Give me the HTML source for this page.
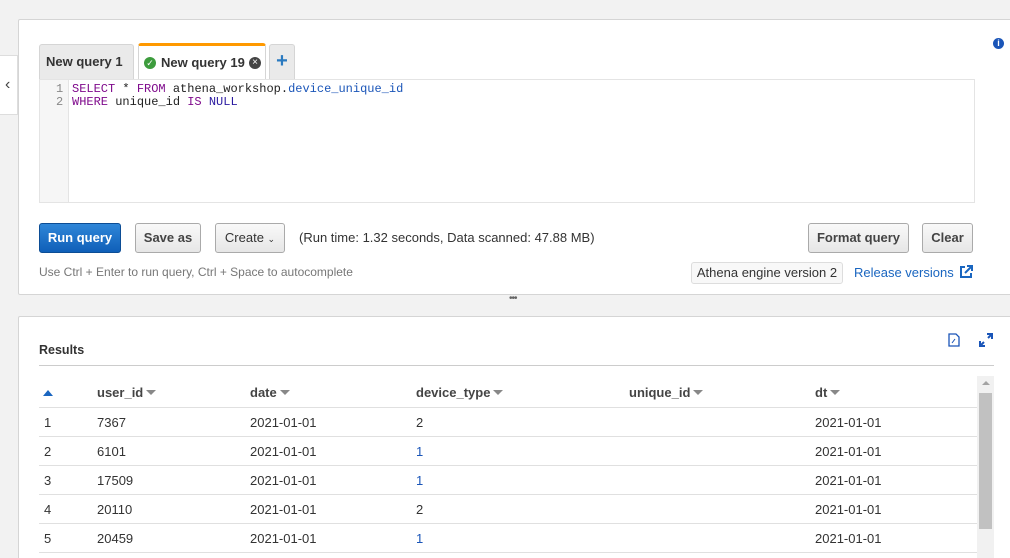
<!DOCTYPE html>
<html style="width:1010px;height:558px;overflow:hidden"><head><style>
*{box-sizing:border-box;margin:0;padding:0}
body{width:1010px;height:558px;background:#f2f2f2;font-family:"Liberation Sans",Arial,sans-serif;font-size:13px;color:#333;position:relative;overflow:hidden}
.abs{position:absolute}
.panel{position:absolute;background:#fff;border:1px solid #d5d5d5;border-radius:2px}
.btn{position:absolute;height:30px;border:1px solid #aaa;border-radius:3px;background:linear-gradient(#f9f9f9,#e6e6e6);font-size:13px;font-weight:bold;color:#444;line-height:28px;text-align:center}
.mono{font-family:"Liberation Mono",monospace;font-size:12px}
.kw{color:#7f0a8c}.bl{color:#1a55b8}
.th{position:absolute;top:385px;font-weight:bold;font-size:13px;color:#444}
.car{display:inline-block;width:0;height:0;border-left:5px solid transparent;border-right:5px solid transparent;border-top:5px solid #888;margin-left:3px;vertical-align:2px}
.row{position:absolute;left:39px;width:938px;height:29px;border-top:1px solid #e0e0e0;font-size:13px}
.row span{position:absolute;top:7px}
</style></head><body>
<div class="abs" style="left:0;top:55px;width:18px;height:60px;background:#fff;border:1px solid #ddd;border-left:none"></div>
<div class="abs" style="left:5px;top:76px;font-size:16px;color:#444">&#8249;</div>
<div class="panel" style="left:18px;top:19px;width:1000px;height:276px"></div>
<div class="abs" style="left:993px;top:38px;width:11px;height:11px;border-radius:50%;background:#1a55b8;color:#fff;font-size:9px;font-weight:bold;text-align:center;line-height:11px">i</div>
<div class="abs" style="left:39px;top:44px;width:95px;height:35px;background:#eaeaea;border:1px solid #d5d5d5;border-bottom:none;border-radius:3px 3px 0 0;font-weight:bold;font-size:13px;padding:9px 0 0 6px;color:#333">New query 1</div>
<div class="abs" style="left:138px;top:43px;width:128px;height:36px;background:#fff;border:1px solid #d5d5d5;border-top:3px solid #ff9900;border-bottom:none;border-radius:3px 3px 0 0;font-weight:bold;font-size:13px;padding:9px 0 0 22px;color:#333">New query 19</div>
<div class="abs" style="left:144px;top:57px;width:12px;height:12px;border-radius:50%;background:#3d9c3d;color:#fff;font-size:9px;text-align:center;line-height:12px">&#10003;</div>
<div class="abs" style="left:249px;top:57px;width:12px;height:12px;border-radius:50%;background:#444;color:#fff;font-size:10px;text-align:center;line-height:11px">&#215;</div>
<div class="abs" style="left:269px;top:44px;width:26px;height:35px;background:#eaeaea;border:1px solid #d5d5d5;border-bottom:none;border-radius:3px 3px 0 0;color:#2a7ac0;font-size:20px;font-weight:bold;text-align:center;line-height:32px">+</div>
<div class="abs" style="left:39px;top:79px;width:936px;height:124px;border:1px solid #e4e4e4;background:#fff"></div>
<div class="abs" style="left:40px;top:80px;width:29px;height:122px;background:#f6f6f6;border-right:1px solid #e4e4e4"></div>
<div class="abs mono" style="left:56px;top:83px;color:#888;line-height:13px">1<br>2</div>
<div class="abs mono" style="left:72px;top:83px;line-height:13px;color:#222"><span class="kw">SELECT</span> * <span class="kw">FROM</span> athena_workshop.<span class="bl">device_unique_id</span><br><span class="kw">WHERE</span> unique_id <span class="kw">IS</span> <span class="kw" style="color:#2a1aa0">NULL</span></div>
<div class="btn" style="left:39px;top:223px;width:82px;background:linear-gradient(#2f86d8,#0f5fb8);border-color:#0c4d95;color:#fff">Run query</div>
<div class="btn" style="left:135px;top:223px;width:66px">Save as</div>
<div class="btn" style="left:215px;top:223px;width:70px;font-weight:normal;color:#333">Create <span style="font-size:9px">&#8964;</span></div>
<div class="abs" style="left:299px;top:230px;font-size:13px;color:#333">(Run time: 1.32 seconds, Data scanned: 47.88 MB)</div>
<div class="btn" style="left:808px;top:223px;width:101px">Format query</div>
<div class="btn" style="left:922px;top:223px;width:51px">Clear</div>
<div class="abs" style="left:39px;top:265px;font-size:12px;color:#777">Use Ctrl + Enter to run query, Ctrl + Space to autocomplete</div>
<div class="abs" style="left:691px;top:262px;width:152px;height:22px;border:1px solid #ddd;border-radius:3px;background:#f8f8f8;font-size:13px;line-height:20px;text-align:center;color:#333">Athena engine version 2</div>
<div class="abs" style="left:854px;top:265px;font-size:13px;color:#1a66c0">Release versions</div>
<svg class="abs" style="left:959px;top:265px" width="14" height="14" viewBox="0 0 14 14"><path d="M6 2H2v10h10V8" fill="none" stroke="#1a66c0" stroke-width="2"/><path d="M8 1h5v5M13 1L6 8" fill="none" stroke="#1a66c0" stroke-width="2"/></svg>
<div class="abs" style="left:509px;top:293px;font-size:10px;color:#666;letter-spacing:-1px">&#8226;&#8226;&#8226;</div>
<div class="panel" style="left:18px;top:316px;width:1000px;height:260px"></div>
<div class="abs" style="left:39px;top:343px;font-weight:bold;font-size:12.5px;color:#333">Results</div>
<svg class="abs" style="left:948px;top:333px" width="12" height="14" viewBox="0 0 12 14"><path d="M1 1h7l3 3v9H1z" fill="none" stroke="#1a55b8" stroke-width="1.3"/><path d="M4 10l3-4" stroke="#1a55b8"/></svg>
<svg class="abs" style="left:979px;top:333px" width="14" height="14" viewBox="0 0 14 14"><path d="M8 1h5v5M13 1L9 5M6 13H1V8M1 13l4-4" fill="none" stroke="#1a55b8" stroke-width="2"/></svg>
<div class="abs" style="left:39px;top:365px;width:955px;height:1px;background:#ccc"></div>
<div class="abs" style="left:43px;top:390px;width:0;height:0;border-left:5px solid transparent;border-right:5px solid transparent;border-bottom:6px solid #1a66c0"></div>
<div class="th" style="left:97px">user_id<span class="car"></span></div>
<div class="th" style="left:250px">date<span class="car"></span></div>
<div class="th" style="left:416px">device_type<span class="car"></span></div>
<div class="th" style="left:629px">unique_id<span class="car"></span></div>
<div class="th" style="left:815px">dt<span class="car"></span></div>
<div class="row" style="top:407px"><span style="left:5px">1</span><span style="left:58px">7367</span><span style="left:211px">2021-01-01</span><span style="left:377px">2</span><span style="left:776px">2021-01-01</span></div>
<div class="row" style="top:436px"><span style="left:5px">2</span><span style="left:58px">6101</span><span style="left:211px">2021-01-01</span><span style="left:377px;color:#1a55b8">1</span><span style="left:776px">2021-01-01</span></div>
<div class="row" style="top:465px"><span style="left:5px">3</span><span style="left:58px">17509</span><span style="left:211px">2021-01-01</span><span style="left:377px;color:#1a55b8">1</span><span style="left:776px">2021-01-01</span></div>
<div class="row" style="top:494px"><span style="left:5px">4</span><span style="left:58px">20110</span><span style="left:211px">2021-01-01</span><span style="left:377px">2</span><span style="left:776px">2021-01-01</span></div>
<div class="row" style="top:523px"><span style="left:5px">5</span><span style="left:58px">20459</span><span style="left:211px">2021-01-01</span><span style="left:377px;color:#1a55b8">1</span><span style="left:776px">2021-01-01</span></div>
<div class="row" style="top:552px"></div>
<div class="abs" style="left:977px;top:376px;width:17px;height:182px;background:#f1f1f1"></div>
<div class="abs" style="left:982px;top:381px;width:0;height:0;border-left:4px solid transparent;border-right:4px solid transparent;border-bottom:4px solid #a3a3a3"></div>
<div class="abs" style="left:979px;top:393px;width:13px;height:136px;background:#c1c1c1"></div>
</body></html>
